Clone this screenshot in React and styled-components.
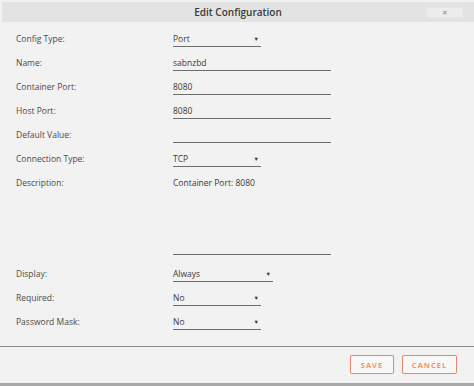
import React from "react"
import styled, { createGlobalStyle } from "styled-components"

const Global = createGlobalStyle`
    html, body {
        margin: 0;
        padding: 0;
        background: #f2f2f2;
    }
    * {
        box-sizing: border-box;
    }
`;

const Window = styled.div`
    width: 474px;
    height: 386px;
    background: #f2f2f2;
    font-family: "Open Sans", "Noto Sans", sans-serif;
    display: flex;
    flex-direction: column;
    border-bottom: 3px solid #a9a9a9;
    padding-top: 2px;
`;

const TitleBar = styled.div`
    height: 20px;
    margin-left: 2px;
    background: #e3e3e3;
    display: flex;
    align-items: center;
    justify-content: center;
    position: relative;
`;

const Title = styled.div`
    font-size: 10px;
    font-weight: 600;
    color: #3a3a3a;
`;

const CloseButton = styled.div`
    position: absolute;
    right: 11px;
    top: 5px;
    width: 37px;
    height: 11px;
    background: #ececec;
    border: 1px solid #e6e6e6;
    display: flex;
    align-items: center;
    justify-content: center;
    font-size: 7px;
    color: #888;
`;

const Body = styled.div`
    padding: 7px 0 9px 16px;
    flex: 1;
`;

const Row = styled.div`
    display: grid;
    grid-template-columns: 157px 1fr;
    height: ${({ $h }) => $h || 24}px;
`;

const Label = styled.div`
    font-size: 8.5px;
    color: #4a4a4a;
    padding-top: 4px;
    line-height: 12px;
`;

const Field = styled.div`
    width: ${({ $w }) => $w}px;
    height: ${({ $h }) => $h || 18}px;
    font-size: 8.5px;
    color: #3a3a3a;
    line-height: 12px;
    padding-top: 4px;
    border-bottom: 1px solid #6e6e6e;
    display: flex;
    justify-content: space-between;
    align-items: flex-start;
`;

const Arrow = styled.span`
    font-size: 5.5px;
    color: #333;
    padding-right: 2px;
    line-height: 12px;
`;

const Footer = styled.div`
    height: 37px;
    border-top: 1px solid #8a8a8a;
    display: flex;
    justify-content: flex-end;
    align-items: flex-start;
    gap: 8px;
    padding: 8px 17px 0 0;
`;

const Button = styled.div`
    width: ${({ $w }) => $w}px;
    height: 19px;
    border: 1px solid #e28a78;
    box-shadow: 0 0 1px #f4c49a;
    border-radius: 2px;
    background: #f7f7f7;
    color: #ee9a5e;
    font-size: 7.5px;
    font-weight: 700;
    letter-spacing: 1px;
    display: flex;
    align-items: center;
    justify-content: center;
`;

const Select = ({ value, w }) => (
    <Field $w={w}>
        <span>{value}</span>
        <Arrow>▼</Arrow>
    </Field>
);

const App = () => {
    return (
        <>
            <Global />
            <Window>
                <TitleBar>
                    <Title>Edit Configuration</Title>
                    <CloseButton>✕</CloseButton>
                </TitleBar>
                <Body>
                    <Row>
                        <Label>Config Type:</Label>
                        <Select value="Port" w={88} />
                    </Row>
                    <Row>
                        <Label>Name:</Label>
                        <Field $w={158}>sabnzbd</Field>
                    </Row>
                    <Row>
                        <Label>Container Port:</Label>
                        <Field $w={158}>8080</Field>
                    </Row>
                    <Row>
                        <Label>Host Port:</Label>
                        <Field $w={158}>8080</Field>
                    </Row>
                    <Row>
                        <Label>Default Value:</Label>
                        <Field $w={158}></Field>
                    </Row>
                    <Row>
                        <Label>Connection Type:</Label>
                        <Select value="TCP" w={88} />
                    </Row>
                    <Row $h={91}>
                        <Label>Description:</Label>
                        <Field $w={158} $h={82}>Container Port: 8080</Field>
                    </Row>
                    <Row>
                        <Label>Display:</Label>
                        <Select value="Always" w={100} />
                    </Row>
                    <Row>
                        <Label>Required:</Label>
                        <Select value="No" w={88} />
                    </Row>
                    <Row>
                        <Label>Password Mask:</Label>
                        <Select value="No" w={88} />
                    </Row>
                </Body>
                <Footer>
                    <Button $w={44}>SAVE</Button>
                    <Button $w={55}>CANCEL</Button>
                </Footer>
            </Window>
        </>
    );
};

export default App
